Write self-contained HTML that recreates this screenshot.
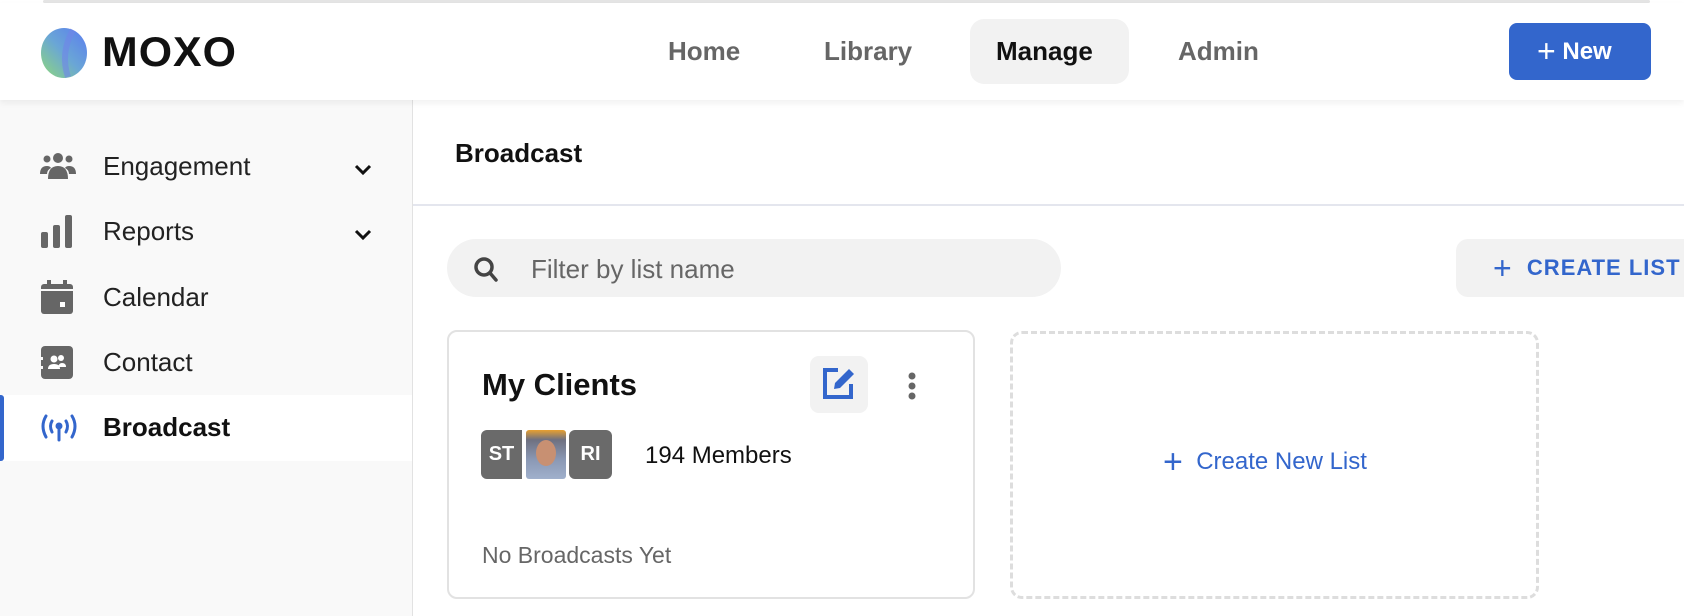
<!DOCTYPE html>
<html><head><meta charset="utf-8"><style>
*{box-sizing:border-box;margin:0;padding:0}
body{width:1684px;height:616px;overflow:hidden;background:#fff;font-family:"Liberation Sans",Arial,sans-serif;position:relative;color:#111}
.a{position:absolute}
.topline{left:43px;top:0;width:1607px;height:3px;background:#e4e4e4;border-radius:2px}
.header{left:0;top:3px;width:1684px;height:97px;background:#fff;box-shadow:0 3px 6px rgba(0,0,0,.06);z-index:2}
.nav{font-size:26px;color:#666;top:33px;font-weight:bold}
.side{left:0;top:100px;width:413px;height:516px;background:#f9f9f9;border-right:1px solid #e2e2e2}
.si{left:103px;font-size:26px;color:#222}
.ic{left:40px}
.chev{left:354px}
</style></head><body>
<div class="a topline"></div>
<div class="a header">
  <svg class="a" style="left:40px;top:24px" width="48" height="52" viewBox="0 0 48 52">
    <defs><linearGradient id="g" x1="0" y1="1" x2="1" y2="0"><stop offset="0" stop-color="#8fd97a"/><stop offset=".5" stop-color="#6aa6d6"/><stop offset="1" stop-color="#5a7cf0"/></linearGradient></defs>
    <ellipse cx="24" cy="26" rx="23" ry="25" fill="url(#g)"/>
    <path d="M33 3 Q20 26 28 50" stroke="#6f86e8" stroke-width="6" fill="none" opacity=".6"/>
  </svg>
  <div class="a" style="left:102px;top:25px;font-size:42px;font-weight:bold;letter-spacing:1px;color:#111;transform:scaleX(1.02);transform-origin:left">MOXO</div>
  <div class="a nav" style="left:668px">Home</div>
  <div class="a nav" style="left:824px">Library</div>
  <div class="a" style="left:970px;top:16px;width:159px;height:65px;background:#f2f2f2;border-radius:14px"></div>
  <div class="a nav" style="left:996px;color:#111">Manage</div>
  <div class="a nav" style="left:1178px">Admin</div>
  <div class="a" style="left:1509px;top:20px;width:142px;height:57px;background:#3366cc;border-radius:8px;color:#fff;font-size:24px;font-weight:bold;line-height:57px;padding-left:28px"><span style="font-size:32px;font-weight:300;vertical-align:-3px">+</span>&nbsp;New</div>
</div>
<div class="a side"></div>
<div class="a" style="left:0;top:395px;width:412px;height:66px;background:#fff"></div>
<div class="a" style="left:0;top:395px;width:4px;height:66px;background:#3366cc;border-radius:0 3px 3px 0"></div>
<svg class="a ic" style="top:152px" width="36" height="28" viewBox="0 0 36 28"><g fill="#666"><circle cx="18" cy="6" r="5"/><circle cx="7" cy="7" r="3.5"/><circle cx="29" cy="7" r="3.5"/><path d="M8 27 Q8 14 18 14 Q28 14 28 27Z"/><path d="M0 22 Q0 14 7 14 Q10 14 11 16 Q7 18 7 22Z"/><path d="M36 22 Q36 14 29 14 Q26 14 25 16 Q29 18 29 22Z"/></g></svg>
<div class="a si" style="top:151px">Engagement</div>
<svg class="a chev" style="top:164px" width="18" height="12" viewBox="0 0 18 12"><path d="M2 2 L9 9 L16 2" stroke="#111" stroke-width="3" fill="none"/></svg>
<svg class="a ic" style="top:215px" width="34" height="33" viewBox="0 0 34 33"><g fill="#666"><rect x="1" y="17" width="7" height="16" rx="2"/><rect x="13" y="10" width="7" height="23" rx="2"/><rect x="25" y="0" width="7" height="33" rx="2"/></g></svg>
<div class="a si" style="top:216px">Reports</div>
<svg class="a chev" style="top:229px" width="18" height="12" viewBox="0 0 18 12"><path d="M2 2 L9 9 L16 2" stroke="#111" stroke-width="3" fill="none"/></svg>
<svg class="a ic" style="top:280px" width="34" height="34" viewBox="0 0 34 34"><g fill="#666"><rect x="1" y="4" width="32" height="30" rx="3"/><rect x="7" y="0" width="4" height="6"/><rect x="23" y="0" width="4" height="6"/></g><rect x="1" y="9" width="32" height="2" fill="#f9f9f9"/><rect x="20" y="22" width="5" height="5" fill="#fff"/></svg>
<div class="a si" style="top:282px">Calendar</div>
<svg class="a ic" style="top:346px" width="34" height="33" viewBox="0 0 34 33"><rect x="1" y="0" width="32" height="33" rx="4" fill="#666"/><g fill="#fff"><circle cx="14" cy="13" r="3.5"/><circle cx="21" cy="12" r="3"/><path d="M8 23 Q8 18 14 18 Q20 18 20 23Z"/><path d="M18 21 Q19 17 22 17 Q26 17 26 21Z"/><rect x="0" y="11" width="3" height="3" fill="#f9f9f9"/><rect x="0" y="20" width="3" height="3" fill="#f9f9f9"/></g></svg>
<div class="a si" style="top:347px">Contact</div>
<svg class="a ic" style="top:413px" width="38" height="30" viewBox="0 0 38 30"><g stroke="#3366cc" stroke-width="3" fill="none" stroke-linecap="round"><path d="M6 3 Q0 13 6 24"/><path d="M32 3 Q38 13 32 24"/><path d="M12 8 Q9 13 12 19"/><path d="M26 8 Q29 13 26 19"/><line x1="19" y1="14" x2="19" y2="27"/></g><circle cx="19" cy="13" r="3.5" fill="#3366cc"/></svg>
<div class="a si" style="top:412px;font-weight:bold;color:#111">Broadcast</div>
<div class="a" style="left:455px;top:138px;font-size:26px;font-weight:bold">Broadcast</div>
<div class="a" style="left:413px;top:204px;width:1271px;height:2px;background:#e4e6ee"></div>
<div class="a" style="left:447px;top:239px;width:614px;height:58px;background:#f2f2f2;border-radius:29px"></div>
<svg class="a" style="left:472px;top:256px" width="30" height="30" viewBox="0 0 30 30"><circle cx="12" cy="11" r="8" stroke="#444" stroke-width="3.5" fill="none"/><line x1="18" y1="17" x2="24" y2="24" stroke="#444" stroke-width="3.5" stroke-linecap="round"/></svg>
<div class="a" style="left:531px;top:254px;font-size:26px;color:#666">Filter by list name</div>
<div class="a" style="left:1456px;top:239px;width:240px;height:58px;background:#f2f2f2;border-radius:12px"></div>
<div class="a" style="left:1493px;top:254px;font-size:22px;color:#3366cc;font-weight:bold;letter-spacing:1px;line-height:28px"><span style="font-size:32px;font-weight:normal;vertical-align:-4px">+</span>&nbsp; CREATE LIST</div>
<div class="a" style="left:447px;top:330px;width:528px;height:269px;border:2px solid #e2e2e2;border-radius:10px"></div>
<div class="a" style="left:482px;top:367px;font-size:31px;font-weight:bold">My Clients</div>
<div class="a" style="left:810px;top:356px;width:58px;height:57px;background:#f2f2f2;border-radius:9px"></div>
<svg class="a" style="left:822px;top:367px" width="34" height="34" viewBox="0 0 34 34"><path d="M16 3 H3 V30 H29 V17" stroke="#3366cc" stroke-width="4" fill="none"/><path d="M12 22 L13 16 L27 2 L32 7 L18 21 Z" fill="#3366cc"/></svg>
<svg class="a" style="left:906px;top:372px" width="12" height="32" viewBox="0 0 12 32"><g fill="#666"><circle cx="6" cy="4" r="3.5"/><circle cx="6" cy="14" r="3.5"/><circle cx="6" cy="24" r="3.5"/></g></svg>
<div class="a" style="left:481px;top:430px;width:41px;height:49px;background:#6a6a6a;border-radius:6px 0 0 6px;color:#fff;font-weight:bold;font-size:20px;text-align:center;line-height:49px">ST</div>
<div class="a" style="left:526px;top:430px;width:40px;height:49px;border-radius:3px;background:linear-gradient(#e8a030 0,#6e7080 20%,#8a98b4 60%,#a0b0cc 100%)"></div>
<div class="a" style="left:536px;top:440px;width:20px;height:26px;border-radius:50%;background:#c89072"></div>
<div class="a" style="left:569px;top:430px;width:43px;height:49px;background:#6a6a6a;border-radius:6px;color:#fff;font-weight:bold;font-size:20px;text-align:center;line-height:49px">RI</div>
<div class="a" style="left:645px;top:442px;font-size:24px;color:#111">194 Members</div>
<div class="a" style="left:482px;top:542px;font-size:23px;color:#666">No Broadcasts Yet</div>
<div class="a" style="left:1010px;top:331px;width:529px;height:268px;border:3px dashed #ddd;border-radius:12px"></div>
<div class="a" style="left:1163px;top:447px;font-size:24px;color:#3366cc;line-height:30px"><span style="font-size:34px;vertical-align:-4px">+</span>&nbsp;&nbsp;Create New List</div>
</body></html>
